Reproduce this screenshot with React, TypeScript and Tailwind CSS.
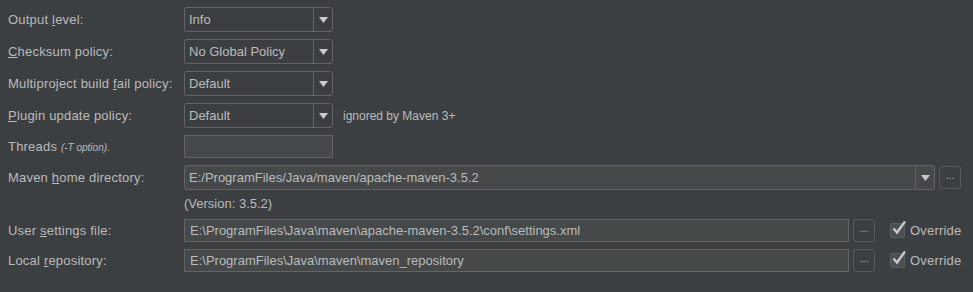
import React from 'react';

const font = { fontFamily: '"Liberation Sans", Arial, sans-serif' };

function Arrow() {
  return (
    <svg width="9" height="6" viewBox="0 0 9 6" className="block">
      <path d="M0 0 H9 L4.5 6 Z" fill="#c9c9c9" />
    </svg>
  );
}

// Combo box with a divider and drop arrow on the right
function Combo({ value, width, editable }: { value: string; width: string; editable?: boolean }) {
  return (
    <div
      className={`flex h-[25px] ${width} rounded-[3px] border border-[#646464] ${editable ? 'bg-[#45494a]' : 'bg-[#3c3f41]'}`}
    >
      <div className="flex-1 flex items-center pl-[4px] text-[13px] text-[#bbbbbb] truncate">{value}</div>
      <div className="w-[19px] flex items-center justify-center border-l border-[#646464]">
        <Arrow />
      </div>
    </div>
  );
}

function Field({ value, width }: { value?: string; width: string }) {
  return (
    <div className={`flex items-center h-[23px] ${width} border border-[#646464] bg-[#45494a] pl-[5px] text-[13px] text-[#bbbbbb]`}>
      {value}
    </div>
  );
}

function Browse() {
  return (
    <div className="w-[22px] h-[23px] ml-[4px] flex items-center justify-center rounded-[3px] border border-[#575a5c] text-[10px] text-[#bbbbbb] leading-none pb-[3px]">
      ...
    </div>
  );
}

function Check() {
  return (
    <div className="flex items-center ml-[15px]">
      <div className="w-[15px] h-[15px] rounded-[2px] border border-[#5b5e60] bg-[#4b4f51] relative">
        <svg width="16" height="16" viewBox="0 0 16 16" className="absolute left-[0px] top-[-4px]">
          <path d="M2.5 8.5 L6 12.5 L14 1.5" stroke="#c8c8c8" strokeWidth="2.4" fill="none" />
        </svg>
      </div>
      <span className="ml-[5px] text-[13px] tracking-[0.2px] text-[#bbbbbb]">Override</span>
    </div>
  );
}

function Label({ children }: { children: React.ReactNode }) {
  return <div className="w-[176px] text-[13px] tracking-[0.2px] text-[#bbbbbb] shrink-0">{children}</div>;
}

export default function App() {
  return (
    <div className="w-[973px] h-[292px] bg-[#3c3f41] pl-[8px] pt-[7px] overflow-hidden" style={font}>
      <div className="flex items-center h-[25px]">
        <Label>Output <u>l</u>evel:</Label>
        <Combo value="Info" width="w-[149px]" />
      </div>
      <div className="flex items-center h-[25px] mt-[7px]">
        <Label><u>C</u>hecksum policy:</Label>
        <Combo value="No Global Policy" width="w-[149px]" />
      </div>
      <div className="flex items-center h-[25px] mt-[7px]">
        <Label>Multiproject build <u>f</u>ail policy:</Label>
        <Combo value="Default" width="w-[149px]" />
      </div>
      <div className="flex items-center h-[25px] mt-[7px]">
        <Label><u>P</u>lugin update policy:</Label>
        <Combo value="Default" width="w-[149px]" />
        <span className="ml-[10px] text-[12px] text-[#bbbbbb]">ignored by Maven 3+</span>
      </div>
      <div className="flex items-center h-[23px] mt-[7px]">
        <Label>
          Threads <span className="italic text-[10px] tracking-normal">(-T option).</span>
        </Label>
        <Field width="w-[149px]" />
      </div>
      <div className="flex items-center h-[25px] mt-[7px]">
        <Label>Maven <u>h</u>ome directory:</Label>
        <Combo value="E:/ProgramFiles/Java/maven/apache-maven-3.5.2" width="w-[751px]" editable />
        <Browse />
      </div>
      <div className="flex items-center h-[28px]">
        <div className="w-[176px]" />
        <span className="text-[13px] text-[#bbbbbb]">(Version: 3.5.2)</span>
      </div>
      <div className="flex items-center h-[23px] mt-[1px]">
        <Label>User <u>s</u>ettings file:</Label>
        <Field value="E:\ProgramFiles\Java\maven\apache-maven-3.5.2\conf\settings.xml" width="w-[665px]" />
        <Browse />
        <Check />
      </div>
      <div className="flex items-center h-[23px] mt-[7px]">
        <Label>Local <u>r</u>epository:</Label>
        <Field value="E:\ProgramFiles\Java\maven\maven_repository" width="w-[665px]" />
        <Browse />
        <Check />
      </div>
    </div>
  );
}
